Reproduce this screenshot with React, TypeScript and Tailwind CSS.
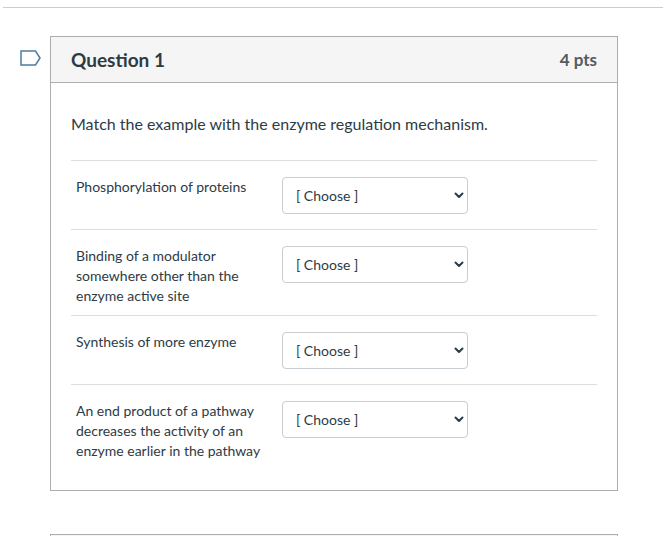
import React from "react";

const rows: string[] = [
  "Phosphorylation of proteins",
  "Binding of a modulator somewhere other than the enzyme active site",
  "Synthesis of more enzyme",
  "An end product of a pathway decreases the activity of an enzyme earlier in the pathway",
];

function Chevron() {
  return (
    <svg width="10" height="7" viewBox="0 0 10 7" className="block">
      <path d="M1.5 1.5 L5 5 L8.5 1.5" fill="none" stroke="#2d3b45" strokeWidth="2" strokeLinecap="round" strokeLinejoin="round" />
    </svg>
  );
}

function Flag() {
  return (
    <svg width="22" height="17" viewBox="0 0 22 17" className="block">
      <path d="M1 1 H15.5 L20 8 L15.5 15 H1 Z" fill="none" stroke="#4d7d9b" strokeWidth="1.5" strokeLinejoin="miter" />
    </svg>
  );
}

export default function App() {
  return (
    <div className="w-[666px] h-[536px] bg-white overflow-hidden font-['Lato',sans-serif] text-[#2d3b45]">
      <div className="pt-[7px] px-[3px]">
        <div className="h-px bg-[#c7cdd1]" />
      </div>
      <div className="mt-[28px] flex">
        <div className="w-[50px] shrink-0 pl-[20px] pt-[14px]">
          <Flag />
        </div>
        <div className="w-[568px] border border-[#adadad]">
          <div className="h-[45px] bg-[#f5f5f5] border-b border-[#adadad] flex items-center justify-between px-5 box-content">
            <div className="text-[19px] font-bold leading-none -mt-[1px]">Question 1</div>
            <div className="text-[17px] font-bold text-[#555a5e] leading-none -mt-[1px]">4 pts</div>
          </div>
          <div className="px-5 pt-[29px] pb-[20px]">
            <p className="text-[16px] leading-6 mb-[24px]">Match the example with the enzyme regulation mechanism.</p>
            {rows.map((r, i) => (
              <div key={i} className="flex items-start border-t border-[#dedede] pt-4 pb-[9px]">
                <div className="w-[211px] shrink-0 px-[5px] text-[14px] leading-5 pr-[14px]">{r}</div>
                <div className="w-[186px] h-[37px] mb-[6px] border border-[#c7cdd1] rounded-[4px] flex items-center justify-between pl-[13px] pr-[3px] bg-white">
                  <span className="text-[14px]">[ Choose ]</span>
                  <Chevron />
                </div>
              </div>
            ))}
          </div>
        </div>
      </div>
      <div className="mt-[43px] ml-[50px] w-[568px] h-[20px] border border-[#adadad] bg-[#f5f5f5]" />
    </div>
  );
}
